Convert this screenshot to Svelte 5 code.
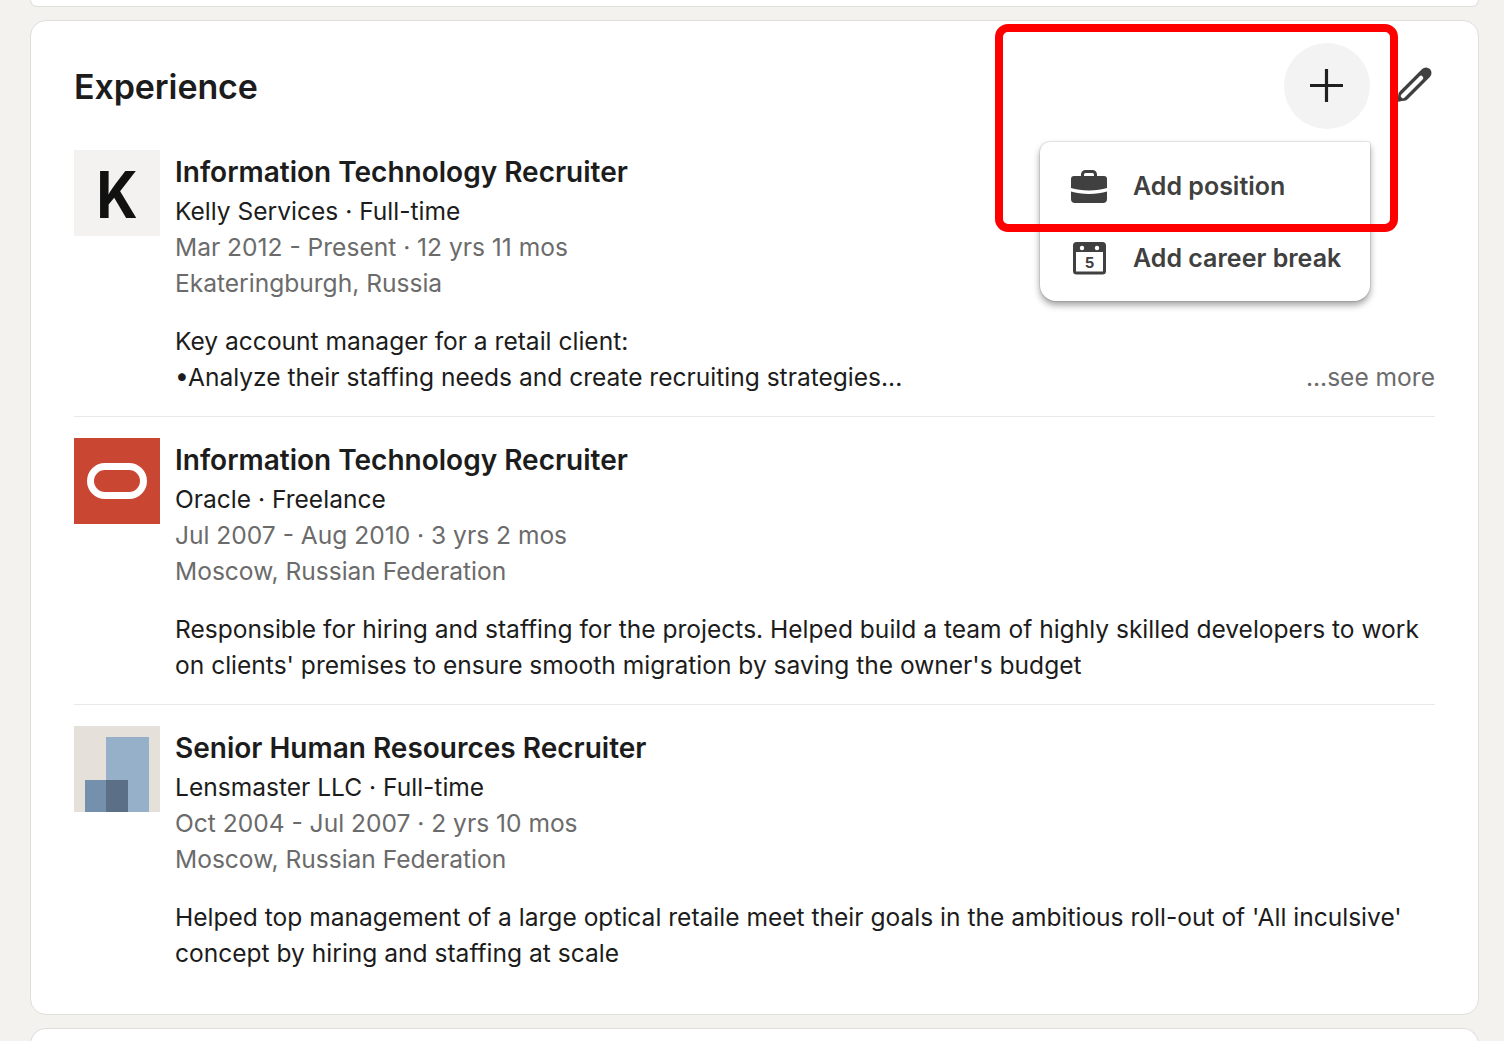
<script>
  const items = [
    { logo: 'k', title: 'Information Technology Recruiter', sub: 'Kelly Services · Full-time', date: 'Mar 2012 - Present · 12 yrs 11 mos', loc: 'Ekateringburgh, Russia', lines: ['Key account manager for a retail client:', '•Analyze their staffing needs and create recruiting strategies...'], more: true },
    { logo: 'o', title: 'Information Technology Recruiter', sub: 'Oracle · Freelance', date: 'Jul 2007 - Aug 2010 · 3 yrs 2 mos', loc: 'Moscow, Russian Federation', lines: ["Responsible for hiring and staffing for the projects. Helped build a team of highly skilled developers to work", "on clients' premises to ensure smooth migration by saving the owner's budget"] },
    { logo: 'l', title: 'Senior Human Resources Recruiter', sub: 'Lensmaster LLC · Full-time', date: 'Oct 2004 - Jul 2007 · 2 yrs 10 mos', loc: 'Moscow, Russian Federation', lines: ["Helped top management of a large optical retaile meet their goals in the ambitious roll-out of 'All inculsive'", 'concept by hiring and staffing at scale'] }
  ];
</script>

<div class="page">
  <div class="stub top"></div>
  <section class="card">
    <header>
      <h2>Experience</h2>
      <button class="plus" aria-label="Add">
        <svg width="34" height="34" viewBox="0 0 34 34"><path d="M16.500 0v33M0 16.500h33" stroke="#1f1f1f" stroke-width="3.200" fill="none"/></svg>
      </button>
      <button class="pencil" aria-label="Edit">
        <svg width="36" height="38" viewBox="0 0 36 38" fill="none">
          <path d="M8 30 30 8" stroke="#404040" stroke-width="11" stroke-linecap="round"/>
          <path d="M1 37 3 27 11 35Z" fill="#404040"/>
          <path d="M7 31 25 13" stroke="#fff" stroke-width="4.500" stroke-linecap="round"/>
        </svg>
      </button>
    </header>

    {#each items as it, i}
      <article class:last={i === items.length - 1}>
        <div class="logo {it.logo}">
          {#if it.logo === 'k'}
            <span>K</span>
          {:else if it.logo === 'o'}
            <i class="ring"></i>
          {:else}
            <svg width="86" height="86" viewBox="0 0 86 86">
              <rect x="32" y="11" width="43" height="75" fill="#97b0c9"/>
              <rect x="11" y="54" width="43" height="32" fill="#7490ac"/>
              <rect x="32" y="54" width="22" height="32" fill="#5b6f86"/>
            </svg>
          {/if}
        </div>
        <div class="body">
          <h3>{it.title}</h3>
          <p class="sub">{it.sub}</p>
          <p class="muted">{it.date}</p>
          <p class="muted">{it.loc}</p>
          <div class="desc">
            {#each it.lines as l, j}
              <div class="line">
                <span>{l}</span>
                {#if it.more && j === 1}<span class="more">...see more</span>{/if}
              </div>
            {/each}
          </div>
        </div>
      </article>
    {/each}

    <div class="menu">
      <div class="mi">
        <svg width="36" height="33" viewBox="0 0 36 33">
          <path d="M11.500 7V4.500a3 3 0 0 1 3-3h7a3 3 0 0 1 3 3V7" fill="none" stroke="#404040" stroke-width="3"/>
          <path d="M3 6h30a3 3 0 0 1 3 3v9c-5 1.500-11 2.500-18 2.500S5 19.500 0 18V9a3 3 0 0 1 3-3Z" fill="#404040"/>
          <path d="M0 21.500c5 1.500 11 2.500 18 2.500s13-1 18-2.500V29a4 4 0 0 1-4 4H4a4 4 0 0 1-4-4Z" fill="#404040"/>
        </svg>
        <span>Add position</span>
      </div>
      <div class="mi">
        <svg width="36" height="33" viewBox="0 0 36 33">
          <rect x="3.500" y="1.500" width="30" height="29.500" rx="2" fill="#fff" stroke="#404040" stroke-width="3"/>
          <path d="M3 2h31v8H3Z" fill="#404040"/>
          <circle cx="11" cy="6" r="2.200" fill="#fff"/><circle cx="26" cy="6" r="2.200" fill="#fff"/>
          <text x="18.500" y="26" text-anchor="middle" class="five">5</text>
        </svg>
        <span>Add career break</span>
      </div>
    </div>
    <div class="redbox"></div>
  </section>
  <div class="stub bottom"></div>
</div>

<style>
  :global(body) { margin: 0; background: #f4f2ee; }
  .page {
    height: 1041px; overflow: hidden; box-sizing: border-box;
    padding: 0 25px 0 30px; display: flex; flex-direction: column; gap: 12px;
    font-family: Inter, "Noto Sans", sans-serif; color: #1c1c1c;
  }
  .stub { background: #fff; border: 1px solid #dfded9; flex: none; }
  .stub.top { height: 6px; border-top: 0; border-radius: 0 0 16px 16px; margin-bottom: 1px; }
  .stub.bottom { height: 30px; border-bottom: 0; border-radius: 16px 16px 0 0; margin-top: 1px; }
  .card {
    position: relative; flex: none; height: 995px; box-sizing: border-box;
    background: #fff; border: 1px solid #dfded9; border-radius: 16px;
    padding: 0 43px 0 43px;
  }
  header { display: flex; align-items: center; height: 129px; box-sizing: border-box; }
  h2 { margin: 0 auto 0 0; font-size: 34px; font-weight: 600; letter-spacing: -.1px; padding-top: 2px; }
  button { border: 0; background: none; padding: 0; display: flex; align-items: center; justify-content: center; }
  .plus { width: 86px; height: 86px; border-radius: 50%; background: #f3f3f3; margin-top: 1px; }
  .pencil { width: 36px; height: 38px; margin: -3px 3px 0 26px; }
  article { display: flex; gap: 15px; height: 266px; border-bottom: 1px solid #e8e8e8; margin-bottom: 21px; }
  article.last { border: 0; }
  .logo { width: 86px; height: 86px; flex: none; display: flex; align-items: center; justify-content: center; overflow: hidden; }
  .logo.k { background: #f3f2f0; font-size: 64px; font-weight: 700; color: #111; padding-top: 2px; box-sizing: border-box; }
  .logo.k span { display: block; transform: scaleX(.9); }
  .logo.o { background: #c84632; }
  .ring { width: 60px; height: 36px; box-sizing: border-box; border: 7px solid #fff; border-radius: 18px; }
  .logo.l { background: #e6e0da; }
  .logo svg { display: block; }
  .body { flex: 1; min-width: 0; }
  h3 { margin: 0; padding-top: 2px; font-size: 28px; font-weight: 600; line-height: 41px; color: #1c1c1c; }
  p { margin: 0; font-size: 24.55px; line-height: 36px; }
  .muted { color: #6b6b6b; }
  .desc { margin-top: 22px; font-size: 24.55px; line-height: 36px; }
  .line { display: flex; justify-content: space-between; white-space: nowrap; }
  .more { color: #6b6b6b; }
  .menu {
    position: absolute; left: 1009px; top: 121px; width: 330px; height: 159px;
    background: #fff; border-radius: 10px 2px 16px 16px;
    box-shadow: 0 0 0 1px rgba(0,0,0,.08), 0 4px 7px rgba(0,0,0,.38);
    display: flex; flex-direction: column; padding-top: 8px; box-sizing: border-box;
  }
  .mi { display: flex; align-items: center; gap: 26px; height: 72px; padding-left: 31px; font-size: 25px; font-weight: 600; color: #404040; }
  .mi svg { flex: none; }
  .five { font: 700 15px Inter, sans-serif; fill: #404040; }
  .redbox {
    position: absolute; left: 964px; top: 3px; width: 403px; height: 208px; box-sizing: border-box;
    border: 8px solid #fe0000; border-radius: 13px; pointer-events: none;
  }
</style>
